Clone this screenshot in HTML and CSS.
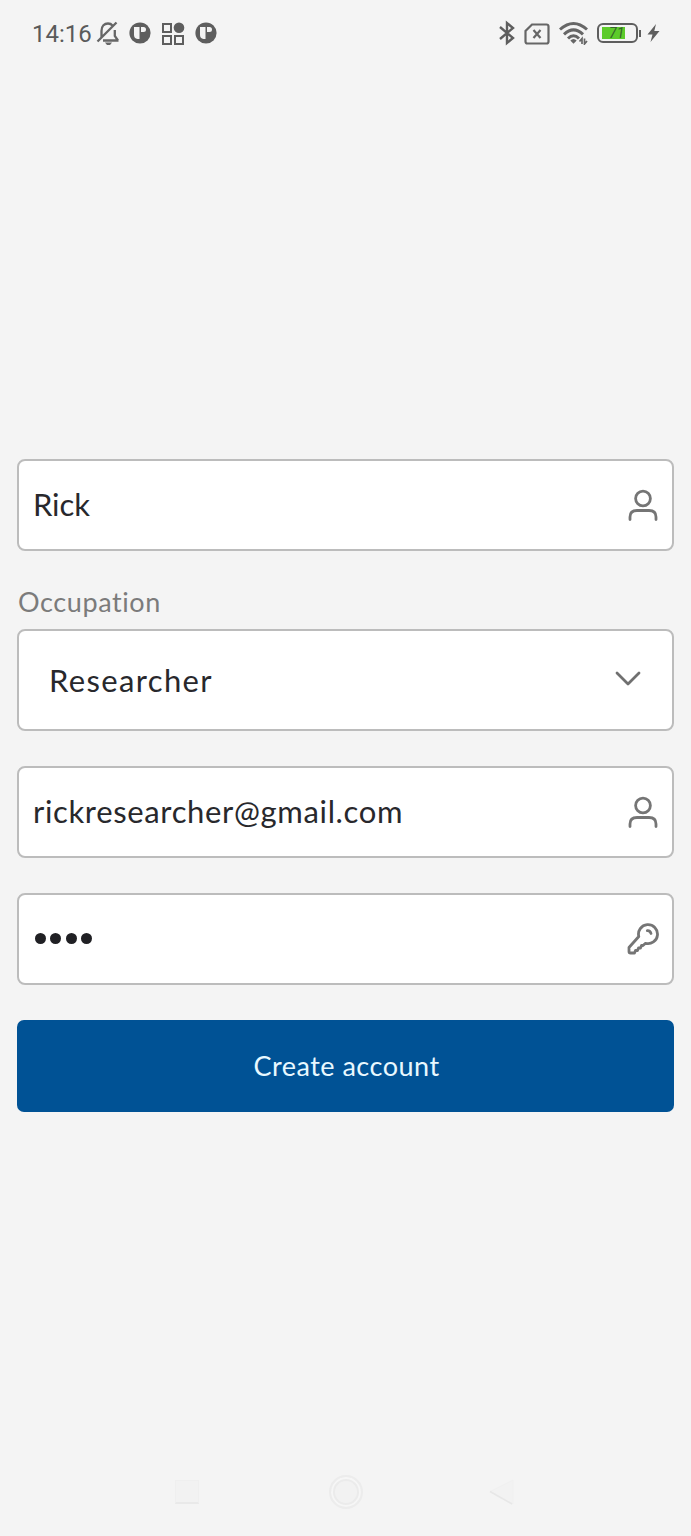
FILE: index.html
```html
<!DOCTYPE html>
<html lang="en">
<head>
  <meta charset="UTF-8">
  <meta name="viewport" content="width=device-width, initial-scale=1">
  <title>Create account</title>
  <link rel="stylesheet" href="styles.css">
</head>
<body>

  <!-- Status bar -->
  <header class="status-bar">
    <div class="status-left">
      <span class="time">14:16</span>
      <svg class="bell" width="24" height="26" viewBox="0 0 24 26" fill="none" stroke="#666" stroke-width="2.300">
        <path d="M7 20.500H22.500M5.500 17V11C5.500 6 8.500 3.500 12 3.500C14 3.500 15.500 4.300 16.500 5.500M18.800 10V16L22 20.500M1.500 21.500L20.500 2.500"/>
        <path d="M9 22.500H16L14 25H11Z" fill="#666" stroke="none"/>
      </svg>
      <svg class="app" width="22" height="22" viewBox="0 0 22 22">
        <circle cx="11" cy="11" r="10.600" fill="#5e5e5e"/>
        <path d="M5 5H10.500V17H8.500Q5 16.500 5 13ZM12 5H14.500Q17 5 17 7.500T14.500 10H12Z" fill="#f4f4f4"/>
      </svg>
      <svg class="grid" width="24" height="24" viewBox="0 0 24 24" fill="none" stroke="#5e5e5e" stroke-width="2">
        <path d="M2 2H10V10H2ZM2 14H10V22H2ZM14 14H22V22H14Z"/>
        <circle cx="18" cy="5.800" r="5.300" fill="#5e5e5e" stroke="none"/>
      </svg>
      <svg class="app" width="22" height="22" viewBox="0 0 22 22">
        <circle cx="11" cy="11" r="10.600" fill="#5e5e5e"/>
        <path d="M5 5H10.500V17H8.500Q5 16.500 5 13ZM12 5H14.500Q17 5 17 7.500T14.500 10H12Z" fill="#f4f4f4"/>
      </svg>
    </div>
    <div class="status-right">
      <svg width="18" height="26" viewBox="0 0 18 26" fill="none" stroke="#5e5e5e" stroke-width="2.400">
        <path d="M2 7L15 18L9 23V3L15 8L2 19"/>
      </svg>
      <svg class="sim" width="26" height="22" viewBox="0 0 26 22" fill="none" stroke="#666" stroke-width="2.200">
        <path d="M8 1.500H22.500Q24.500 1.500 24.500 3.500V18.500Q24.500 20.500 22.500 20.500H3.500Q1.500 20.500 1.500 18.500V8Z"/>
        <path d="M9.500 7L16.500 15M16.500 7L9.500 15"/>
      </svg>
      <svg class="wifi" width="30" height="24" viewBox="0 0 30 24" fill="none" stroke="#666" stroke-width="3">
        <path d="M1 8.500Q14.500 -3.500 28 8.500M5 13.300Q14.500 4.500 24 13.300M9 17.500Q14.500 12 20 17.500"/>
        <path d="M11.300 19.500Q14.500 16.500 17.700 19.500L14.500 22.800Z" fill="#666" stroke="none"/>
        <path d="M23 23V17.500L20.500 20.500M25.500 17.500V23L28 20" stroke-width="1.700"/>
      </svg>
      <span class="battery"><span class="battery-level">71</span></span>
      <span class="battery-tip"></span>
      <svg class="bolt" width="13" height="20" viewBox="0 0 13 20">
        <path d="M9 1L0.500 11.500H5.500L3.500 19L12.500 8H7.300Z" fill="#5e5e5e"/>
      </svg>
    </div>
  </header>

  <!-- Sign up form -->
  <main class="form">
    <div class="field">
      <span class="name">Rick</span>
      <svg class="icon" width="32" height="34" viewBox="0 0 32 34" fill="none" stroke="#757575" stroke-width="2.800" stroke-linecap="round">
        <circle cx="16" cy="9.500" r="7.400"/>
        <path d="M3 30.500V28Q3 21.500 10 21.500H22Q29 21.500 29 28V30.500"/>
      </svg>
    </div>

    <div class="label">Occupation</div>
    <div class="field select">
      <span class="occupation">Researcher</span>
      <svg class="chevron" width="28" height="18" viewBox="0 0 28 18" fill="none" stroke="#707070" stroke-width="2.800" stroke-linecap="round" stroke-linejoin="round">
        <path d="M3 3L14 14L25 3"/>
      </svg>
    </div>

    <div class="field">
      <span class="email">rickresearcher@gmail.com</span>
      <svg class="icon" width="32" height="34" viewBox="0 0 32 34" fill="none" stroke="#757575" stroke-width="2.800" stroke-linecap="round">
        <circle cx="16" cy="9.500" r="7.400"/>
        <path d="M3 30.500V28Q3 21.500 10 21.500H22Q29 21.500 29 28V30.500"/>
      </svg>
    </div>

    <div class="field">
      <div class="password"><i></i><i></i><i></i><i></i></div>
      <svg class="icon key" width="32" height="34" viewBox="0 0 32 34" fill="none" stroke="#757575" stroke-width="2.800" stroke-linecap="round" stroke-linejoin="round">
        <path d="M11.800 14.500A9.500 9.500 0 1 1 18.500 21.300L16 23.500H14.500L13.500 26H11.500L10.500 28.500H8.500L7.500 31H3.500Q2 31 2 29.500V25.500Z"/>
        <path d="M20.300 8.700Q23.200 8.500 24 11.500"/>
      </svg>
    </div>

    <button class="create">Create account</button>
  </main>

  <!-- Navigation bar -->
  <footer class="nav-bar">
    <span class="nav-square"></span>
    <span class="nav-circle"></span>
    <svg class="nav-back" width="26" height="26" viewBox="0 0 26 26">
      <path d="M24 1V25L1 12.500Z" fill="#f2f2f2" stroke="#f0f0f0"/>
      <path d="M1 12.500L23 25" stroke="#e7e7e7" stroke-width="1.500"/>
    </svg>
  </footer>

</body>
</html>
```
FILE: styles.css
```css
* {
  box-sizing: border-box;
}

body {
  margin: 0;
  height: 1536px;
  display: flex;
  flex-direction: column;
  background: #f4f4f4;
  color: #28282c;
  font-family: Lato, sans-serif;
}

svg {
  flex: none;
}

.status-bar {
  height: 66px;
  padding: 0 32px;
  display: flex;
  align-items: center;
  justify-content: space-between;
}

.status-left,
.status-right {
  display: flex;
  align-items: center;
}

.time {
  width: 64px;
  font: 24px/28px Roboto, sans-serif;
  color: #5a5a5a;
  padding-top: 2px;
}

.bell {
  margin-right: 9px;
}

.grid {
  margin: 2px 10px 0;
}

.sim {
  margin: 2px 9px 0 8px;
}

.wifi {
  margin-right: 8px;
}

.battery {
  width: 41px;
  height: 20px;
  padding: 2px 3px;
  border: 2px solid #5e5e5e;
  border-radius: 6px;
}

.battery-level {
  display: block;
  width: 23px;
  height: 12px;
  padding-left: 7px;
  background: #5dcb2a;
  color: #35642b;
  font: italic 14px/12px Roboto, sans-serif;
}

.battery-tip {
  width: 2px;
  height: 7px;
  margin: 0 6px 0 1px;
  background: #5e5e5e;
}

.bolt {
  margin-right: -1px;
}

.form {
  padding: 393px 17px 0;
}

.field {
  height: 92px;
  padding: 0 13px 0 14px;
  margin-bottom: 35px;
  display: flex;
  align-items: center;
  justify-content: space-between;
  background: #fff;
  border: 2px solid #bcbcbc;
  border-radius: 8px;
  font-size: 31px;
  line-height: 40px;
}

.icon {
  margin-top: 2px;
}

.key {
  margin-top: 0;
}

.name {
  margin-bottom: 2px;
  letter-spacing: -0.1px;
}

.email {
  letter-spacing: 0.65px;
  margin-bottom: 2px;
}

.label {
  height: 43px;
  padding-left: 1px;
  font-size: 27px;
  line-height: 32px;
  letter-spacing: 0.6px;
  color: #7b7b7b;
}

.select {
  height: 102px;
  padding: 0 30px;
}

.occupation {
  letter-spacing: 1.35px;
}

.chevron {
  margin-bottom: 3px;
}

.password {
  display: flex;
  gap: 4.4px;
  padding: 0 0 2px 2px;
}

.password i {
  width: 11px;
  height: 11px;
  border-radius: 50%;
  background: #202024;
}

.create {
  display: block;
  width: 100%;
  height: 92px;
  padding: 0 0 2px 2px;
  border: none;
  border-radius: 7px;
  background: #005295;
  color: #e8f8ff;
  font-family: Lato, sans-serif;
  font-size: 27px;
  letter-spacing: 0.5px;
}

.nav-bar {
  height: 88px;
  margin-top: auto;
  padding: 0 176px 0 175px;
  display: flex;
  align-items: center;
  justify-content: space-between;
}

.nav-square {
  width: 24px;
  height: 24px;
  background: #f2f2f2;
  border: 1px solid #efefef;
  border-bottom: 2px solid #e9e9e9;
}

.nav-circle {
  width: 34px;
  height: 34px;
  margin-left: 3px;
  border: 2px solid #ececec;
  border-radius: 50%;
  background: #f2f2f2;
  box-shadow: inset 0 0 0 2px #f6f6f6, inset 0 0 0 4px #ebebeb;
}
```
